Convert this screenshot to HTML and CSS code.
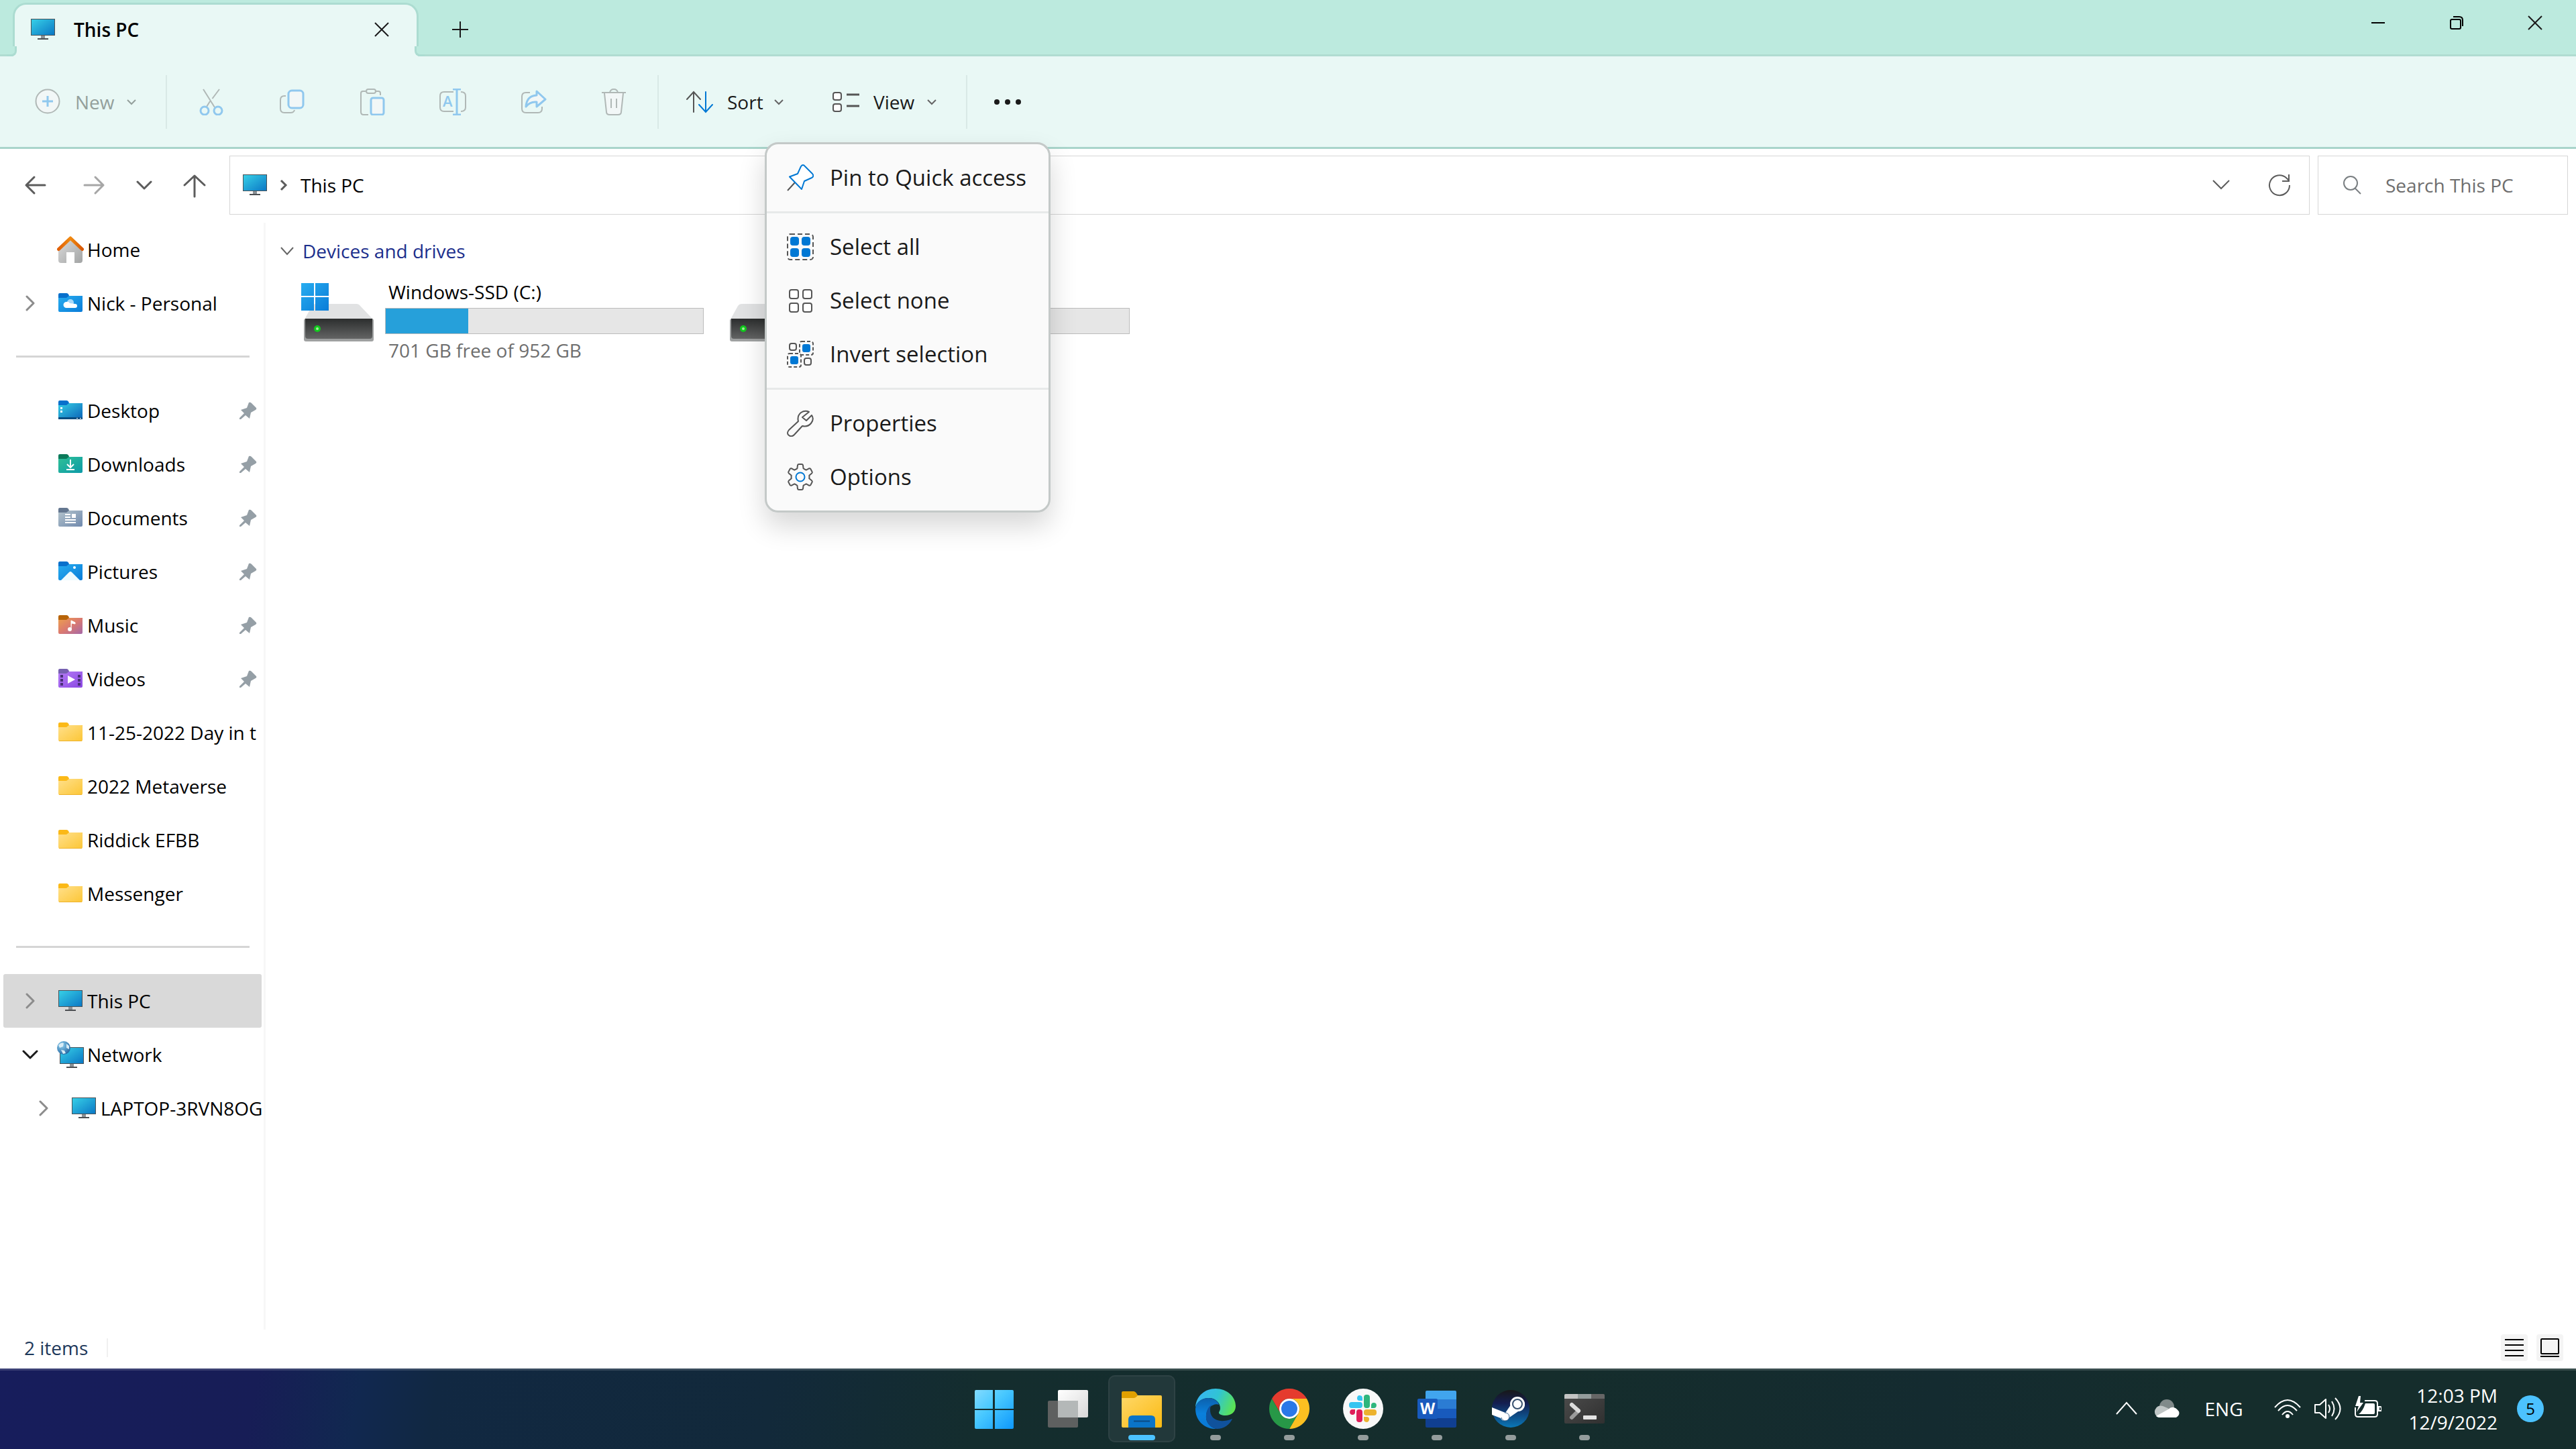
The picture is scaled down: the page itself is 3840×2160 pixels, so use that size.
FILE: index.html
```html
<!DOCTYPE html>
<html lang="en">
<head>
<meta charset="utf-8">
<meta name="viewport" content="width=device-width, initial-scale=1">
<title>This PC</title>
<link rel="stylesheet" href="styles.css">
</head>
<body>
<svg class="sprite" aria-hidden="true">
  <defs>
    <linearGradient id="g-screen" x1="0" y1="0" x2="1" y2="1"><stop offset="0.1" stop-color="#33c8e4"/><stop offset="1" stop-color="#0a76c4"/></linearGradient>
    <linearGradient id="g-blue" x1="0" y1="0" x2="1" y2="1"><stop offset="0" stop-color="#27adf0"/><stop offset="1" stop-color="#0a7cd8"/></linearGradient>
    <linearGradient id="g-desk" x1="0" y1="0" x2="1" y2="1"><stop offset="0" stop-color="#37d0e6"/><stop offset="1" stop-color="#0a62b8"/></linearGradient>
    <linearGradient id="g-down" x1="0" y1="0" x2="1" y2="1"><stop offset="0" stop-color="#2fc196"/><stop offset="1" stop-color="#0d9aa8"/></linearGradient>
    <linearGradient id="g-docs" x1="0" y1="0" x2="1" y2="1"><stop offset="0" stop-color="#b4c4cc"/><stop offset="1" stop-color="#7089ad"/></linearGradient>
    <linearGradient id="g-music" x1="0" y1="0" x2="1" y2="1"><stop offset="0" stop-color="#eda04c"/><stop offset="0.5" stop-color="#db7a70"/><stop offset="1" stop-color="#a568a8"/></linearGradient>
    <linearGradient id="g-video" x1="0" y1="0" x2="1" y2="1"><stop offset="0" stop-color="#b57cf5"/><stop offset="1" stop-color="#8a47e2"/></linearGradient>
    <linearGradient id="g-gold" x1="0" y1="0" x2="1" y2="1"><stop offset="0" stop-color="#ffe08c"/><stop offset="1" stop-color="#fcc636"/></linearGradient>
    <linearGradient id="g-house" x1="0" y1="0" x2="1" y2="1"><stop offset="0" stop-color="#dcdcdc"/><stop offset="1" stop-color="#a2a4a4"/></linearGradient>
    <linearGradient id="g-roof" x1="0" y1="0" x2="1" y2="0"><stop offset="0" stop-color="#e06008"/><stop offset="0.5" stop-color="#f08a10"/><stop offset="1" stop-color="#d95804"/></linearGradient>
    <radialGradient id="g-globe" cx="0.35" cy="0.3" r="0.8"><stop offset="0" stop-color="#8fd0f0"/><stop offset="1" stop-color="#1c5f9c"/></radialGradient>
    <linearGradient id="g-drive" x1="0" y1="0" x2="0" y2="1"><stop offset="0" stop-color="#2c2e2e"/><stop offset="1" stop-color="#636464"/></linearGradient>
    <linearGradient id="g-start" x1="0" y1="0" x2="58" y2="58" gradientUnits="userSpaceOnUse"><stop offset="0" stop-color="#86dcff"/><stop offset="0.45" stop-color="#48c8ff"/><stop offset="1" stop-color="#109afc"/></linearGradient>
    <linearGradient id="g-white" x1="0" y1="0" x2="1" y2="1"><stop offset="0" stop-color="#ffffff"/><stop offset="1" stop-color="#d8d8d8"/></linearGradient>
    <linearGradient id="g-files" x1="0" y1="0" x2="1" y2="1"><stop offset="0" stop-color="#ffd869"/><stop offset="1" stop-color="#fbba12"/></linearGradient>
    <linearGradient id="g-edge1" x1="0" y1="0.3" x2="1" y2="0.6"><stop offset="0" stop-color="#38b4f4"/><stop offset="0.5" stop-color="#30c4d4"/><stop offset="1" stop-color="#5ce450"/></linearGradient>
    <linearGradient id="g-edge2" x1="0" y1="0" x2="0" y2="1"><stop offset="0" stop-color="#0c60ac"/><stop offset="0.5" stop-color="#0a80dc"/><stop offset="1" stop-color="#0a78d4"/></linearGradient>
    <linearGradient id="g-steam" x1="0" y1="0" x2="0" y2="1"><stop offset="0" stop-color="#181818"/><stop offset="0.35" stop-color="#141e50"/><stop offset="1" stop-color="#0a78b8"/></linearGradient>
    <linearGradient id="g-term" x1="0" y1="0" x2="1" y2="1"><stop offset="0" stop-color="#4c4c4c"/><stop offset="1" stop-color="#303030"/></linearGradient>
  </defs>
  <symbol id="monitor" viewBox="0 0 40 40">
    <rect x="17" y="29" width="6" height="5" fill="#8b9196"/><rect x="12" y="33" width="16" height="2" fill="#4c4f52"/>
    <rect x="2.5" y="4.500" width="35" height="24" fill="url(#g-screen)" stroke="#4a5257"/>
  </symbol>
  <symbol id="tab-back" viewBox="0 0 40 40"><path d="M2 7q0-2 2-2h10q3 0 4 4h20v6H2z"/></symbol>
  <symbol id="front" viewBox="0 0 40 40"><path d="M2 12h12l4-3h19q1 0 1 1v21q0 2-2 2H4q-2 0-2-2z"/></symbol>
  <symbol id="folder" viewBox="0 0 40 40"><use href="#tab-back" fill="#fbb917"/><use href="#front" fill="url(#g-gold)"/><path d="M3 32.500h34" stroke="#eeb22a"/></symbol>
  <symbol id="pin" viewBox="0 0 26 26"><path d="M14 1q2-1 4 1l7 7q1 2-1 3l-7 4-2 9-6-5-7 6-2 0v-2l7-7-5-5 9-3z" fill="#959fa6"/></symbol>
  <symbol id="right" viewBox="0 0 24 24"><path d="M7 2l10 10L7 22" fill="none" stroke="currentColor" stroke-width="3" stroke-linecap="round" stroke-linejoin="round"/></symbol>
  <symbol id="down" viewBox="0 0 24 24"><path d="M2 7l10 10L22 7" fill="none" stroke="currentColor" stroke-width="3" stroke-linecap="round" stroke-linejoin="round"/></symbol>
  <symbol id="small-down" viewBox="0 0 24 24"><path d="M6 9l6 6 6-6" fill="none" stroke="currentColor" stroke-width="2"/></symbol>
  <symbol id="drive" viewBox="0 0 110 88">
    <path d="M22 31h60q4 0 6 3l19 20H5L16 34q2-3 6-3z" fill="#e1e2e3"/>
    <rect x="4" y="53" width="104" height="34" rx="3" fill="#9fa1a1"/><path d="M6 53h100v26q0 4-4 4H10q-4 0-4-4z" fill="url(#g-drive)"/>
    <circle cx="24" cy="68" r="5" fill="#12c81e"/><circle cx="24" cy="68" r="2" fill="#a8eaa0"/>
  </symbol>
</svg>

<main class="explorer">
  <header class="titlebar">
    <div class="tab">
      <svg class="i40"><use href="#monitor"/></svg>
      <span class="tab-title">This PC</span>
      <button class="tab-close" aria-label="Close tab"><svg class="i24" viewBox="0 0 24 24"><path d="M2 2l20 20M22 2L2 22" stroke="#1a1a1a" stroke-width="2"/></svg></button>
    </div>
    <button class="tab-new" aria-label="New tab"><svg class="i24" viewBox="0 0 24 24"><path d="M12 0v24M0 12h24" stroke="#1a1a1a" stroke-width="2"/></svg></button>
    <div class="window-controls">
      <button aria-label="Minimize"><svg class="i24" viewBox="0 0 24 24"><path d="M2 12h20" stroke="#000" stroke-width="2"/></svg></button>
      <button aria-label="Restore"><svg class="i24" viewBox="0 0 24 24" fill="none" stroke="#000" stroke-width="2"><rect x="3" y="7" width="15" height="14" rx="2"/><path d="M7 3h9q5 0 5 5v9"/></svg></button>
      <button aria-label="Close"><svg class="i24" viewBox="0 0 24 24"><path d="M2 2l20 20M22 2L2 22" stroke="#1a1a1a" stroke-width="2"/></svg></button>
    </div>
  </header>

  <div class="toolbar">
    <button class="cmd cmd-new" disabled>
      <svg class="i40" viewBox="0 0 40 40" fill="none" stroke-width="2"><circle cx="20" cy="19" r="17.500" stroke="#b0b8b6" fill="#f2f7f7"/><path d="M20 11v16M12 19h16" stroke="#90c8ee" stroke-width="3"/></svg>
      <span>New</span><svg class="i24"><use href="#small-down"/></svg>
    </button>
    <span class="rule"></span>
    <div class="tools">
      <button class="tool" disabled aria-label="Cut"><svg class="i40" viewBox="0 0 40 40" fill="none" stroke-width="2"><path d="M8 1l17 27M32 1L21.500 15M18 19l-5 8" stroke="#b0b8b6"/><circle cx="10" cy="33" r="6" stroke="#90c8ee" stroke-width="3"/><circle cx="30" cy="33" r="6" stroke="#90c8ee" stroke-width="3"/></svg></button>
      <button class="tool" disabled aria-label="Copy"><svg class="i40" viewBox="0 0 40 40" fill="none" stroke-width="2"><path d="M11 11H9q-6 0-6 6v13q0 6 6 6h9q5 0 6-4" stroke="#b0b8b6"/><rect x="15" y="3" width="22" height="26" rx="5" stroke="#90c8ee" stroke-width="3" fill="#f2f7f7"/></svg></button>
      <button class="tool" disabled aria-label="Paste"><svg class="i40" viewBox="0 0 40 40" fill="none" stroke-width="2"><path d="M10 4H6Q3 4 3 7v28q0 4 4 4h7M25 4h4q3 0 3 3v3" stroke="#b0b8b6"/><rect x="11" y="1" width="14" height="6" rx="3" stroke="#b0b8b6"/><rect x="18" y="14" width="19" height="25" rx="3" stroke="#90c8ee" stroke-width="3" fill="#f2f7f7"/></svg></button>
      <button class="tool" disabled aria-label="Rename"><svg class="i40" viewBox="0 0 40 40" fill="none" stroke-width="2"><path d="M21 5H7Q1 5 1 11v17q0 6 6 6h14M32 5q7 0 7 6v17q0 6-7 6" stroke="#b0b8b6"/><path d="M26 1v38M20 1h12M20 39h12" stroke="#90c8ee" stroke-width="3"/><text x="5" y="27" class="glyph-a">A</text></svg></button>
      <button class="tool" disabled aria-label="Share"><svg class="i40" viewBox="0 0 40 40" fill="none" stroke-width="2"><path d="M15 6H9q-6 0-6 6v18q0 6 6 6h18q6 0 6-6v-3" stroke="#b0b8b6"/><path d="M25 4l13 12-13 11v-7q-10-1-16 7 1-16 16-17z" stroke="#90c8ee" stroke-width="3" stroke-linejoin="round" fill="#f2f7f7"/></svg></button>
      <button class="tool" disabled aria-label="Delete"><svg class="i40" viewBox="0 0 40 40" fill="none" stroke-width="2" stroke="#b0b8b6"><path d="M6 7l3 28q0 4 5 4h12q5 0 5-4l3-28" fill="#f2f7f7"/><path d="M2 6h36M14 6q1-5 6-5t6 5M16 15v14M24 15v14"/></svg></button>
    </div>
    <span class="rule"></span>
    <button class="cmd cmd-sort">
      <svg class="i40" viewBox="0 0 40 40" fill="none" stroke-width="2" stroke-linecap="round"><path d="M11 35V6M1 16L11 5l10 11" stroke="#555"/><path d="M29 5v29M19 24l10 11 10-11" stroke="#0078d4"/></svg>
      <span>Sort</span><svg class="i24"><use href="#small-down"/></svg>
    </button>
    <button class="cmd cmd-view">
      <svg class="i40" viewBox="0 0 40 40" fill="none" stroke-width="2" stroke="#555"><rect x="1" y="6" width="12" height="11" rx="3" fill="#fff"/><rect x="1" y="23" width="12" height="11" rx="3" fill="#fff"/><path d="M21 9h19M21 26h19" stroke-width="3"/></svg>
      <span>View</span><svg class="i24"><use href="#small-down"/></svg>
    </button>
    <span class="rule"></span>
    <div class="more">
      <button class="more-button" aria-label="See more" aria-expanded="true"><svg class="i40" viewBox="0 0 40 40" fill="#1a1a1a"><circle cx="4" cy="20" r="4"/><circle cx="20" cy="20" r="4"/><circle cx="36" cy="20" r="4"/></svg></button>
      <div class="menu">
        <button class="menu-item"><svg class="i40" viewBox="0 0 40 40" fill="none" stroke-width="2" stroke-linejoin="round"><path d="M1 39l11-12" stroke="#555"/><path d="M4 18.500L16 14l5-11q3-4 6 0l11 11q3 4-1 6l-11 5-4 12z" stroke="#0078d4" fill="#fff"/></svg>Pin to Quick access</button>
        <hr>
        <button class="menu-item"><svg class="i40" viewBox="0 0 40 40"><rect x="1" y="1" width="38" height="38" rx="4" fill="none" stroke="#555" stroke-width="2" stroke-dasharray="7 4"/><g fill="#0078d4"><rect x="5" y="5" width="13" height="13" rx="4"/><rect x="22" y="5" width="13" height="13" rx="4"/><rect x="5" y="22" width="13" height="13" rx="4"/><rect x="22" y="22" width="13" height="13" rx="4"/></g></svg>Select all</button>
        <button class="menu-item"><svg class="i40" viewBox="0 0 40 40" fill="#fff" stroke="#555" stroke-width="2"><rect x="4" y="4" width="13" height="13" rx="3"/><rect x="24" y="4" width="13" height="13" rx="3"/><rect x="4" y="24" width="13" height="13" rx="3"/><rect x="24" y="24" width="13" height="13" rx="3"/></svg>Select none</button>
        <button class="menu-item"><svg class="i40" viewBox="0 0 40 40" fill="none" stroke="#555" stroke-width="2"><rect x="4" y="4" width="10" height="10" rx="3"/><rect x="26" y="26" width="10" height="10" rx="3"/><rect x="19" y="1" width="20" height="20" rx="3" stroke-dasharray="5 3"/><rect x="1" y="19" width="20" height="20" rx="3" stroke-dasharray="5 3"/><g fill="#0078d4" stroke="none"><rect x="23" y="5" width="12" height="12" rx="3"/><rect x="5" y="23" width="12" height="12" rx="3"/></g></svg>Invert selection</button>
        <hr>
        <button class="menu-item"><svg class="i40" viewBox="0 0 40 40" fill="none" stroke="#555" stroke-width="2" stroke-linejoin="round"><path d="M33 3q-6-3-12 1-6 5-4 13L3 30q-4 5 0 8t8-1l12-13q8 2 13-4 5-6 1-12l-8 8-6-5z"/></svg>Properties</button>
        <button class="menu-item"><svg class="i40" viewBox="0 0 40 40" fill="none" stroke="#555" stroke-width="2" stroke-linejoin="round"><path d="M15.400 7.300L16 2.500q.3-1.500 2-1.500h4q1.700 0 2 1.500l.6 4.800q2 1.500 4.100 2.400l4.300-2.400q1.500-.5 2.300.7l2.300 4.300q.6 1-.4 2.100l-3.900 3.300q.3 2.300 0 4.600l3.900 3.300q1 1 .4 2.100L35.300 32q-.8 1.200-2.300.7l-4.300-2.400q-2 1-4.100 2.400l-.6 4.800q-.3 1.500-2 1.500h-4q-1.700 0-2-1.500l-.6-4.800q-2-1.500-4.100-2.400L7 32.700q-1.500.5-2.300-.7l-2.300-4.300q-.6-1 .4-2.100l3.900-3.300q-.3-2.300 0-4.600l-3.900-3.300q-1-1-.4-2.100L4.700 8q.8-1.200 2.300-.7l4.300 2.400q2-1 4.100-2.400z"/><circle cx="20" cy="20" r="6.500" stroke="#0078d4"/></svg>Options</button>
      </div>
    </div>
  </div>

  <nav class="navbar" aria-label="Address">
    <button aria-label="Back"><svg class="i40" viewBox="0 0 40 40" fill="none" stroke="#5c5c5c" stroke-width="3" stroke-linecap="round" stroke-linejoin="round"><path d="M6 20h28M18 8L6 20l12 12"/></svg></button>
    <button aria-label="Forward"><svg class="i40" viewBox="0 0 40 40" fill="none" stroke="#a6a6a6" stroke-width="3" stroke-linecap="round" stroke-linejoin="round"><path d="M6 20h28M22 8l12 12-12 12"/></svg></button>
    <button aria-label="Recent locations"><svg class="i24 mid"><use href="#down"/></svg></button>
    <button aria-label="Up"><svg class="i40" viewBox="0 0 40 40" fill="none" stroke="#5c5c5c" stroke-width="3" stroke-linecap="round" stroke-linejoin="round"><path d="M20 37V6M5 20L20 6l15 14"/></svg></button>
    <div class="address">
      <svg class="i40"><use href="#monitor"/></svg>
      <svg class="crumb" viewBox="0 0 24 24"><path d="M8 5l7 7-7 7" fill="none" stroke="#5c5c5c" stroke-width="3"/></svg>
      <a href="#" class="crumb-text">This PC</a>
      <button class="drop" aria-label="Previous locations"><svg class="i28" viewBox="0 0 28 28"><path d="M2 7l12 12L26 7" fill="none" stroke="#5c5c5c" stroke-width="2"/></svg></button>
      <button class="refresh" aria-label="Refresh"><svg class="i40" viewBox="0 0 40 40" fill="none" stroke="#5c5c5c" stroke-width="2"><path d="M35 20a15 15 0 1 1-5-11l4 4M34 4v10H24"/></svg></button>
    </div>
    <div class="search">
      <svg class="i28" viewBox="0 0 28 28" fill="none" stroke="#7a7f82" stroke-width="2"><circle cx="12" cy="11" r="10"/><path d="M18 18l9 9"/></svg>
      <input type="search" aria-label="Search This PC" placeholder="Search This PC">
    </div>
  </nav>

  <div class="panes">
    <nav class="sidebar" aria-label="Folders">
      <a href="#" class="row"><span class="i24"></span><svg class="i40" viewBox="0 0 40 40"><path d="M2 18L20 4l18 14v18q0 4-4 4h-8V24H14v16H6q-4 0-4-4z" fill="url(#g-house)"/><path d="M2.500 19.500L20 3l17.500 16.500" fill="none" stroke="url(#g-roof)" stroke-width="5" stroke-linecap="round" stroke-linejoin="round"/></svg><span class="label">Home</span></a>
      <a href="#" class="row"><svg class="i24"><use href="#right"/></svg><svg class="i40" viewBox="0 0 40 40"><use href="#tab-back" fill="#0870cc"/><use href="#front" fill="url(#g-blue)"/><circle cx="20" cy="19" r="5" fill="#a8d8f8"/><path d="M14 27a4 4 0 0 1 0-9q3-1 5 2l8 1a3 3 0 0 1 0 6z" fill="#fff"/></svg><span class="label">Nick - Personal</span></a>
      <hr>
      <a href="#" class="row"><span class="i24"></span><svg class="i40" viewBox="0 0 40 40"><use href="#tab-back" fill="#0870cc"/><use href="#front" fill="url(#g-desk)"/><path d="M2 30h36v3H2z" fill="#084c80"/><path d="M5 15h3v3H5zM5 20h3v3H5zM29 31h2v1h-2zM34 31h2v1h-2z" fill="#fff"/></svg><span class="label">Desktop</span><svg class="pin"><use href="#pin"/></svg></a>
      <a href="#" class="row"><span class="i24"></span><svg class="i40" viewBox="0 0 40 40"><use href="#tab-back" fill="#0b7a5a"/><use href="#front" fill="url(#g-down)"/><path d="M20 13v12M15 20l5 5 5-5M14 28h12" fill="none" stroke="#fff" stroke-width="2"/></svg><span class="label">Downloads</span><svg class="pin"><use href="#pin"/></svg></a>
      <a href="#" class="row"><span class="i24"></span><svg class="i40" viewBox="0 0 40 40"><use href="#tab-back" fill="#647790"/><use href="#front" fill="url(#g-docs)"/><path d="M12 15h8M12 19h8M12 23h16M12 27h16" stroke="#fff" stroke-width="2"/><path d="M22 14h6v6h-6z" fill="#fff"/></svg><span class="label">Documents</span><svg class="pin"><use href="#pin"/></svg></a>
      <a href="#" class="row"><span class="i24"></span><svg class="i40" viewBox="0 0 40 40"><use href="#tab-back" fill="#0870cc"/><use href="#front" fill="url(#g-blue)"/><path d="M6 33l12-12q2-2 4 0l12 12z" fill="#eefafe"/><circle cx="26" cy="14" r="2" fill="#fff"/></svg><span class="label">Pictures</span><svg class="pin"><use href="#pin"/></svg></a>
      <a href="#" class="row"><span class="i24"></span><svg class="i40" viewBox="0 0 40 40"><use href="#tab-back" fill="#b86408"/><use href="#front" fill="url(#g-music)"/><circle cx="19" cy="26" r="3" fill="#fff"/><path d="M21 26V13l6 3v2l-5-1" fill="#fff" stroke="#fff"/></svg><span class="label">Music</span><svg class="pin"><use href="#pin"/></svg></a>
      <a href="#" class="row"><span class="i24"></span><svg class="i40" viewBox="0 0 40 40"><use href="#tab-back" fill="#7660b0"/><use href="#front" fill="url(#g-video)"/><path d="M5 14h4v4H5zM5 20h4v4H5zM5 26h4v4H5zM31 14h4v4h-4zM31 20h4v4h-4zM31 26h4v4h-4z" fill="#4a3078"/><path d="M16 15l11 6-11 6z" fill="#fff"/></svg><span class="label">Videos</span><svg class="pin"><use href="#pin"/></svg></a>
      <a href="#" class="row"><span class="i24"></span><svg class="i40"><use href="#folder"/></svg><span class="label">11-25-2022 Day in t</span></a>
      <a href="#" class="row"><span class="i24"></span><svg class="i40"><use href="#folder"/></svg><span class="label">2022 Metaverse</span></a>
      <a href="#" class="row"><span class="i24"></span><svg class="i40"><use href="#folder"/></svg><span class="label">Riddick EFBB</span></a>
      <a href="#" class="row"><span class="i24"></span><svg class="i40"><use href="#folder"/></svg><span class="label">Messenger</span></a>
      <hr>
      <a href="#" class="row selected" aria-current="page"><svg class="i24"><use href="#right"/></svg><svg class="i40"><use href="#monitor"/></svg><span class="label">This PC</span></a>
      <a href="#" class="row"><svg class="i24 dark"><use href="#down"/></svg><svg class="i40" viewBox="0 0 40 40"><rect x="19" y="33" width="6" height="5" fill="#8b9196"/><rect x="14" y="38" width="16" height="2" fill="#4c4f52"/><rect x="4.500" y="9.500" width="35" height="24" fill="url(#g-screen)" stroke="#4a5257"/><circle cx="10" cy="10" r="10" fill="url(#g-globe)"/><path d="M2 6q4-5 8-3l-1 5-5 2zM6 13l5 1 2 4-4 1zM14 4l4 3v5l-4-2z" fill="#d8ecf6"/></svg><span class="label">Network</span></a>
      <a href="#" class="row nested"><svg class="i24"><use href="#right"/></svg><svg class="i40"><use href="#monitor"/></svg><span class="label">LAPTOP-3RVN8OG</span></a>
    </nav>

    <section class="content">
      <h2 class="group"><svg class="i24" viewBox="0 0 24 24"><path d="M3 7l9 10 9-10" fill="none" stroke="#666" stroke-width="2"/></svg>Devices and drives</h2>
      <div class="drives">
        <article class="drive">
          <svg class="drive-icon" viewBox="0 0 110 88"><use href="#drive"/><path d="M0 0h19v19H0zM21 0h20v19H21zM0 21h19v20H0zM21 21h20v20H21z" fill="url(#g-blue)"/></svg>
          <div class="drive-info">
            <span class="drive-name">Windows-SSD (C:)</span>
            <div class="bar"><div class="fill" style="width:26%"></div></div>
            <span class="drive-free">701 GB free of 952 GB</span>
          </div>
        </article>
        <article class="drive">
          <svg class="drive-icon"><use href="#drive"/></svg>
          <div class="drive-info"><span class="drive-name"></span><div class="bar"></div><span class="drive-free"></span></div>
        </article>
      </div>
    </section>
  </div>

  <footer class="status">
    <span class="count">2 items</span>
    <button aria-label="Details view"><svg class="i28" viewBox="0 0 28 28"><path d="M0 2h28M0 10h28M0 18h28M0 26h28" stroke="#000" stroke-width="2"/></svg></button>
    <button aria-label="Large icons view"><svg class="i28" viewBox="0 0 28 28" fill="none" stroke="#000" stroke-width="2"><rect x="1" y="1" width="26" height="22" rx="1"/><path d="M0 27h28"/></svg></button>
  </footer>
</main>

<footer class="taskbar">
  <div class="apps">
    <button class="app" aria-label="Start"><svg viewBox="0 0 60 60"><path d="M3 2h25v28H1V4q0-2 2-2zM31 2h26q2 0 2 2v26H31zM1 32h27v28H3q-2 0-2-2zM31 32h28v26q0 2-2 2H31z" fill="url(#g-start)"/></svg></button>
    <button class="app" aria-label="Task view"><svg viewBox="0 0 60 60"><rect x="15" y="2" width="45" height="41" rx="2" fill="url(#g-white)"/><rect y="18" width="45" height="40" rx="2" fill="#5e6060"/><path d="M15 18h30v25H15z" fill="#b4b8b8"/></svg></button>
    <button class="app active" aria-label="File Explorer"><svg viewBox="0 0 60 60"><path d="M0 6q0-2 2-2h16q3 0 6 6h10v8H0z" fill="#e0a000"/><path d="M0 14h18q3 0 6-4h34q2 0 2 2v44q0 2-2 2H2q-2 0-2-2z" fill="url(#g-files)"/><path d="M10 58V46q0-6 6-6h28q6 0 6 6v12z" fill="#0a74c8"/><path d="M18 48.500h24" stroke="#0a4a84" stroke-width="2"/></svg></button>
    <button class="app running" aria-label="Microsoft Edge"><svg viewBox="0 0 60 60"><path d="M0 28C1 11 14 0 30 0c17 0 30 12 30 26 0 9-7 14-15 14-6 0-10-2-10-4s2-3 2-7c0-7-6-15-17-15C10 14 2 20 0 28z" fill="url(#g-edge1)"/><path d="M0 30c1-11 10-16 19-16s15 5 16 10c-7-3-18 4-19 16-1 10 6 18 16 20C14 61 0 48 0 30z" fill="url(#g-edge2)"/><path d="M22 30c-1 15 12 23 33 15-4 9-13 15-23 15-11-2-17-10-16-20 0-8 4-14 10-17-3 2-4 4-4 7z" fill="#10529c"/></svg></button>
    <button class="app running" aria-label="Google Chrome"><svg viewBox="0 0 60 60"><path d="M30 15h26A30 30 0 0 0 4 15l13 22.500A15 15 0 0 1 30 15z" fill="#e53b2e"/><path d="M30 15h26a30 30 0 0 1-26 45l13-22.500A15 15 0 0 0 30 15z" fill="#fcc021"/><path d="M4 15a30 30 0 0 0 26 45l13-22.500a15 15 0 0 1-26 0z" fill="#279847"/><circle cx="30" cy="30" r="15" fill="#fff"/><circle cx="30" cy="30" r="12" fill="#2a78e8"/></svg></button>
    <button class="app running" aria-label="Slack"><svg viewBox="0 0 60 60"><circle cx="30" cy="30" r="30" fill="#f8f8f8"/><g fill="#36c5f0"><rect x="9" y="20" width="20" height="9" rx="4"/><path d="M29 18h-5a4 4 0 1 1 5-4z"/></g><g fill="#2eb67d"><rect x="31" y="9" width="9" height="20" rx="4"/><path d="M42 29v-5a4 4 0 1 1 4 5z"/></g><g fill="#e01e5a"><rect x="20" y="31" width="9" height="19" rx="4"/><path d="M18 31v5a4 4 0 1 1-4-5z"/></g><g fill="#ecb22e"><rect x="31" y="31" width="19" height="9" rx="4"/><path d="M31 42h5a4 4 0 1 1-5 4z"/></g></svg></button>
    <button class="app running" aria-label="Word"><svg viewBox="0 0 60 60"><path d="M13 16V5q0-2 2-2h42q2 0 2 2v11z" fill="#41a5ee"/><path d="M13 16h46v14H13z" fill="#2b7cd3"/><path d="M13 30h46v14H13z" fill="#185abd"/><path d="M13 44h46v12q0 2-2 2H15q-2 0-2-2z" fill="#103f91"/><rect x="1" y="15" width="30" height="30" rx="2" fill="#185abd"/><text x="16" y="38" text-anchor="middle" class="glyph-w">W</text></svg></button>
    <button class="app running" aria-label="Steam"><svg viewBox="0 0 60 60"><circle cx="30" cy="30" r="28" fill="url(#g-steam)"/><path d="M2 28l20 8 9-13a10 10 0 1 1 10 11L28 43a7 7 0 0 1-13 1L2 39z" fill="#fff"/><circle cx="40" cy="23" r="11" fill="#fff"/><circle cx="40" cy="23" r="7" fill="none" stroke="#38506e" stroke-width="2"/><path d="M16 43a6 6 0 1 0 5-7" fill="none" stroke="#38608a"/></svg></button>
    <button class="app running" aria-label="Terminal"><svg viewBox="0 0 60 60"><rect y="8" width="60" height="44" rx="2" fill="url(#g-term)"/><path d="M0 15v-5q0-2 2-2h18v7z" fill="#c4c4c4"/><path d="M20 8h20v7H20z" fill="#949c9c"/><path d="M40 8h18q2 0 2 2v5H40z" fill="#666"/><path d="M21 33L11 43" stroke="#9a9a9a" stroke-width="6" stroke-linecap="round"/><path d="M11 24l10 9" stroke="#dcdcdc" stroke-width="6" stroke-linecap="round"/><rect x="28" y="40" width="20" height="6" rx="1" fill="#e4e4e4"/></svg></button>
  </div>
  <div class="tray">
    <button aria-label="Show hidden icons"><svg class="i40" viewBox="0 0 40 40"><path d="M5 28l15-17 15 17" fill="none" stroke="#fff" stroke-width="2"/></svg></button>
    <button class="cloud" aria-label="OneDrive"><svg class="i40" viewBox="0 0 40 40"><circle cx="20" cy="17" r="11" fill="#808a8a"/><path d="M8 33a9 9 0 1 1 6-17q6 2 12 6l-16 11z" fill="#c0c6c6"/><path d="M4 31l18-10q8-8 16 3a7 7 0 0 1-4 9H10q-4 0-6-2z" fill="#fff"/></svg></button>
    <button class="lang">ENG</button>
    <button class="system" aria-label="Network, volume and battery">
      <svg class="i40" viewBox="0 0 40 40" fill="none" stroke="#fff" stroke-width="2"><path d="M1 18q19-22 38 0M6 23q14-16 28 0M12 29q8-10 16 0"/><circle cx="20" cy="31" r="3" fill="#fff" stroke="none"/></svg>
      <svg class="i40" viewBox="0 0 40 40" fill="none" stroke="#fff" stroke-width="2" stroke-linejoin="round"><path d="M1 14h7l9-8v28l-9-8H1zM21 14q4 6 0 12M26 9q7 11 0 22M31 4q15 16 0 32"/></svg>
      <svg class="i40" viewBox="0 0 40 40" fill="none" stroke="#fff" stroke-width="2"><path d="M15 8h15q4 0 4 4v16q0 4-4 4H5q-4 0-4-4V18M36 17h2q2 0 2 2v4h-4z"/><path d="M16 12h12q2 0 2 2v12q0 2-2 2H6q6-4 10-16z" fill="#fff" stroke="none"/><path d="M6 1L1 16h5L3 25 13 11H8l1-10z" fill="#fff" stroke="none"/></svg>
    </button>
    <button class="clock"><time>12:03 PM</time><time>12/9/2022</time></button>
    <button class="badge" aria-label="5 notifications">5</button>
  </div>
</footer>
</body>
</html>
```
FILE: styles.css
```css
* { box-sizing: border-box; }

body {
  margin: 0;
  min-height: 100vh;
  display: flex;
  flex-direction: column;
  font: 28px/40px "Open Sans", "Noto Sans", sans-serif;
  color: #000;
  background: #fff;
}

button {
  padding: 0;
  border: 0;
  background: none;
  font: inherit;
  color: inherit;
  display: flex;
  align-items: center;
  justify-content: center;
}

a { color: inherit; text-decoration: none; }
svg { display: block; flex: none; }
.sprite { position: absolute; width: 0; height: 0; }
.i24 { width: 24px; height: 24px; flex: none; }
.i28 { width: 28px; height: 28px; }
.i40 { width: 40px; height: 40px; }
.glyph-a { font: 600 22px "Open Sans", sans-serif; fill: #90c8ee; stroke: none; }
.glyph-w { font: 700 23px "Open Sans", sans-serif; fill: #fff; }

.explorer { flex: 1; display: flex; flex-direction: column; }

/* Title bar */
.titlebar {
  display: flex;
  height: 84px;
  padding: 4px 3px 0 19px;
  background: #bceade;
  border-bottom: 3px solid #b0dcd1;
}
.tab {
  position: relative;
  display: flex;
  align-items: center;
  width: 605px;
  height: 80px;
  padding: 0 32px 0 22px;
  background: #e9f8f5;
  border: 3px solid #acdcd1;
  border-bottom-color: #e9f8f5;
  border-radius: 20px 20px 0 0;
}
.tab::before, .tab::after {
  content: "";
  position: absolute;
  bottom: -3px;
  width: 12px;
  height: 12px;
  background: #bceade;
  border-bottom: 3px solid #acdcd1;
}
.tab::before { left: -12px; border-right: 3px solid #acdcd1; border-bottom-right-radius: 8px; }
.tab::after { right: -12px; border-left: 3px solid #acdcd1; border-bottom-left-radius: 8px; }
.tab-title { margin-left: 26px; font-weight: 600; }
.tab-close { width: 40px; height: 40px; margin-left: auto; }
.tab-new { width: 80px; margin-left: 22px; height: 80px; }
.window-controls { display: flex; margin-left: auto; height: 60px; }
.window-controls button { width: 117px; }

/* Command bar */
.toolbar {
  display: flex;
  align-items: center;
  height: 138px;
  background: #e9f8f5;
  border-bottom: 3px solid #a9d5cb;
}
.rule { width: 2px; height: 80px; background: #d9e9e6; }
.cmd { height: 80px; justify-content: flex-start; color: #1a1a1a; }
.cmd .i24 { margin-left: auto; color: #666; }
.cmd-new { width: 157px; margin: 0 39px 0 51px; color: #94a09c; }
.cmd-new .i24 { color: #94a09c; }
.cmd span { margin-left: 21px; }
.tools { display: flex; padding: 0 5px 0 6px; }
.tool { width: 120px; height: 80px; }
.cmd-sort { width: 150px; margin-left: 41px; }
.cmd-view { width: 160px; margin: 0 39px 0 68px; }
.more { position: relative; margin-left: 10px; }
.more-button { width: 100px; height: 80px; }

.menu {
  position: absolute;
  z-index: 2;
  top: 100px;
  right: -14px;
  width: 426px;
  padding: 10px 0;
  background: #fafafa;
  background-clip: padding-box;
  border: 3px solid #c4c9c8;
  border-radius: 20px;
  box-shadow: 0 20px 40px rgba(0, 0, 0, 0.16);
}
.menu-item {
  width: 100%;
  height: 80px;
  padding-left: 30px;
  gap: 24px;
  justify-content: flex-start;
  font-size: 33px;
  color: #1a1a1a;
  white-space: nowrap;
}
.menu hr { height: 3px; margin: 10px 0; border: 0; background: #e7e9e9; }

/* Navigation bar */
.navbar {
  display: grid;
  grid-template-columns: 94px 80px 70px 80px minmax(0, 1fr) 385px;
  padding: 10px 12px 12px 6px;
  height: 110px;
}
.mid { color: #5c5c5c; }
.address, .search { display: flex; align-items: center; border: 1px solid #d6d6d6; margin-left: 12px; }
.address { padding: 0 24px 0 17px; }
.search { padding-left: 36px; }
.crumb { width: 24px; height: 24px; margin-left: 11px; }
.crumb-text { margin: 0 auto 0 13px; }
.drop { width: 60px; height: 60px; margin-right: 37px; }
.refresh { width: 40px; height: 60px; }
.search input {
  flex: 1;
  min-width: 0;
  height: 80px;
  margin-left: 36px;
  padding: 0;
  border: 0;
  outline: 0;
  background: none;
  font: inherit;
}
.search input::placeholder { color: #6e6e6e; opacity: 1; }

/* Folder pane */
.panes { flex: 1; display: flex; }
.sidebar { width: 396px; padding: 0 3px 0 5px; border-right: 3px solid #f7f7f7; }
.row { display: flex; align-items: center; height: 80px; padding: 0 7px 0 28px; border-radius: 3px; color: #000; }
.row .i24 { margin-right: 28px; color: #8c8c8c; }
.row .i24.dark { color: #1a1a1a; }
.label { flex: 1; min-width: 0; margin: 0 -7px 0 5px; overflow: hidden; white-space: nowrap; }
.pin { width: 26px; height: 26px; }
.selected { background: #d9d9d9; }
.nested { padding-left: 48px; }
.sidebar hr { height: 3px; margin: 38px 18px 39px 19px; border: 0; background: #d5d5d5; }

/* Drives */
.content { flex: 1; padding-left: 20px; }
.group { display: flex; align-items: center; gap: 11px; height: 83px; margin: 0; font-size: 28px; font-weight: 400; color: #1c2f8c; }
.drives { display: flex; gap: 35px; padding-left: 33px; }
.drive { display: flex; gap: 15px; width: 600px; }
.drive-icon { width: 110px; height: 88px; margin-top: 7px; }
.drive-info { flex: 1; display: grid; grid-template-rows: 40px 39px 40px; gap: 4px; }
.drive-name, .drive-free { padding-left: 5px; }
.drive-free { color: #6e6e6e; }
.bar { background: #e6e6e6; border: 1px solid #bcbcbc; }
.fill { height: 100%; background: #26a0da; }

/* Status bar */
.status { display: flex; align-items: center; gap: 13px; height: 58px; padding: 0 19px 4px 36px; color: #1e395b; }
.count { margin-right: auto; padding-right: 28px; line-height: 28px; border-right: 2px solid #f0f0f0; }
.status button { width: 40px; height: 40px; background: #f4f4f4; border-radius: 4px; }

/* Taskbar */
.taskbar {
  display: grid;
  grid-template-columns: 1fr auto 1fr;
  align-items: center;
  height: 120px;
  padding-left: 3px;
  box-shadow: inset 0 3px rgba(255, 255, 255, 0.16);
  color: #fff;
  background: linear-gradient(100deg, #171d5c 0, #171d56 10%, #112850 14%, #112842 17%, #12293a 30%, #142d2e 38%, #152d2c 60%, #142b30 75%, #152d2c 85%);
}
.apps { grid-column: 2; display: flex; gap: 10px; }
.app { position: relative; width: 100px; height: 100px; border-radius: 10px; }
.app svg { width: 60px; height: 60px; }
.active { background: #22383a; box-shadow: inset 0 0 0 2px #2e4244; }
.active::after, .running::after {
  content: "";
  position: absolute;
  bottom: 3px;
  left: 50%;
  width: 16px;
  height: 8px;
  margin-left: -8px;
  border-radius: 4px;
  background: #949c9c;
}
.active::after { width: 40px; margin-left: -20px; background: #4cc2ff; }
.tray { display: flex; align-items: center; justify-content: flex-end; padding-right: 48px; }
.cloud { margin-left: 20px; }
.lang { width: 60px; margin: 0 45px 0 35px; }
.system { gap: 20px; }
.clock { flex-direction: column; align-items: flex-end; width: 145px; margin: 0 29px 0 28px; }
.badge { width: 40px; height: 40px; border-radius: 50%; background: #4cc2ff; color: #000; font-size: 24px; }
```
